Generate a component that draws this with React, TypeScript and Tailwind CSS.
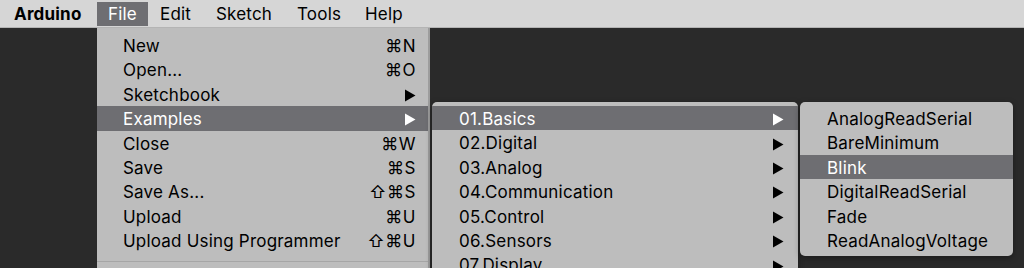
import { ReactNode } from "react";

const fileItems: { label: string; shortcut?: string; arrow?: boolean; active?: boolean }[] = [
  { label: "New", shortcut: "⌘N" },
  { label: "Open...", shortcut: "⌘O" },
  { label: "Sketchbook", arrow: true },
  { label: "Examples", arrow: true, active: true },
  { label: "Close", shortcut: "⌘W" },
  { label: "Save", shortcut: "⌘S" },
  { label: "Save As...", shortcut: "⇧⌘S" },
  { label: "Upload", shortcut: "⌘U" },
  { label: "Upload Using Programmer", shortcut: "⇧⌘U" },
];

const exampleGroups = [
  "01.Basics",
  "02.Digital",
  "03.Analog",
  "04.Communication",
  "05.Control",
  "06.Sensors",
  "07.Display",
];

const basics = [
  "AnalogReadSerial",
  "BareMinimum",
  "Blink",
  "DigitalReadSerial",
  "Fade",
  "ReadAnalogVoltage",
];

function Arrow({ light }: { light?: boolean }) {
  return (
    <svg width="12" height="13" viewBox="0 0 12 13" className={light ? "fill-white" : "fill-black"}>
      <path d="M1 0.5 L11.5 6.5 L1 12.5 Z" />
    </svg>
  );
}

function Row({
  active,
  children,
  className = "",
}: {
  active?: boolean;
  children: ReactNode;
  className?: string;
}) {
  return (
    <div
      className={`flex h-[24.4px] items-center justify-between pt-[3px] ${
        active ? "bg-[#6e6e72] text-white" : "text-black"
      } ${className}`}
    >
      {children}
    </div>
  );
}

export default function App() {
  return (
    <div
      className="relative h-[268px] w-[1024px] overflow-hidden bg-[#2a2a2a] text-[17px] tracking-[0.2px]"
      style={{ fontFamily: "Inter, 'DejaVu Sans', sans-serif" }}
    >
      {/* menu bar */}
      <div className="flex h-[28px] items-center border-b border-[#b4b4b4] bg-[#d6d6d6] pt-[3px] text-black">
        <span className="w-[97px] pl-[14px] font-bold">Arduino</span>
        <span className="-mt-[3px] flex h-full w-[51px] items-center bg-[#6e6e72] pl-[11px] pt-[3px] text-white">File</span>
        <span className="w-[56px] pl-[12px]">Edit</span>
        <span className="w-[81px] pl-[12px]">Sketch</span>
        <span className="w-[68px] pl-[12px]">Tools</span>
        <span className="pl-[12px]">Help</span>
      </div>

      {/* dropdowns */}
      <div className="absolute left-[97px] top-[28px] flex items-start">
        <div className="h-[260px] w-[333px] border-r-2 border-[#9d9d9d] bg-[#bdbdbd] pt-[5px]">
          {fileItems.map((item) => (
            <Row key={item.label} active={item.active} className="pl-[26px] pr-[12px]">
              <span>{item.label}</span>
              {item.shortcut && <span className="tracking-[0.5px]">{item.shortcut}</span>}
              {item.arrow && <Arrow light={item.active} />}
            </Row>
          ))}
          <div className="mt-[8px] border-t border-[#a6a6a6]" />
        </div>

        <div className="ml-[2px] mt-[74px] h-[200px] w-[366px] overflow-hidden rounded-[5px] bg-[#bdbdbd] pt-[4px] shadow-[0_2px_6px_rgba(0,0,0,0.35)]">
          {exampleGroups.map((g, i) => (
            <Row key={g} active={i === 0} className="pl-[27px] pr-[14px]">
              <span>{g}</span>
              <Arrow light={i === 0} />
            </Row>
          ))}
        </div>

        <div className="ml-[2px] mt-[74px] w-[213px] overflow-hidden rounded-[5px] bg-[#bdbdbd] py-[4px] shadow-[0_2px_6px_rgba(0,0,0,0.35)]">
          {basics.map((b) => (
            <Row key={b} active={b === "Blink"} className="pl-[27px] pr-[14px]">
              <span>{b}</span>
            </Row>
          ))}
        </div>
      </div>
    </div>
  );
}
